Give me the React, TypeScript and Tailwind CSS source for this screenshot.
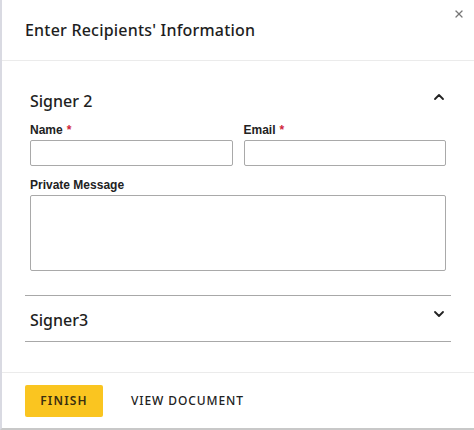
import { X, ChevronUp, ChevronDown } from "lucide-react";

const heading = { fontFamily: '"Noto Sans", "DejaVu Sans", sans-serif' };
const label = { fontFamily: '"Liberation Sans", Arial, sans-serif' };

function Field({ title, required }: { title: string; required?: boolean }) {
  return (
    <div className="flex flex-col">
      <label className="h-[16px] text-[12px] font-bold text-[#222] leading-[16px]" style={label}>
        {title}
        {required && <span className="ml-1 text-[#d0253a]">*</span>}
      </label>
      <input className="mt-[2px] h-[26px] rounded-[2px] border border-[#a9a9a9] bg-white" />
    </div>
  );
}

export default function App() {
  return (
    <div className="w-[474px] h-[430px] bg-white border-l-2 border-l-[#d9dae2] border-b-2 border-b-[#c8c8c8] flex flex-col text-[#1e1e1e]">
      <header className="relative h-[61px] flex items-center pl-[23px] border-b border-[#ebebeb]">
        <h1 className="text-[16px] font-medium tracking-[0.2px]" style={heading}>
          Enter Recipients' Information
        </h1>
        <X className="absolute right-[9px] top-[8px] w-[12px] h-[12px] text-[#777]" strokeWidth={2.5} />
      </header>

      <div className="px-[23px] flex flex-col">
        <div className="h-[61px] pt-[28px] flex items-start justify-between">
          <span className="pl-[5px] text-[16px] font-medium" style={heading}>Signer 2</span>
          <ChevronUp className="mr-[4px] mt-[0px] w-[16px] h-[16px] text-[#222]" strokeWidth={2.75} />
        </div>
        <div className="px-[5px] flex flex-col">
          <div className="grid grid-cols-2 gap-[11px]">
            <Field title="Name" required />
            <Field title="Email" required />
          </div>
          <label className="mt-[11px] h-[16px] text-[12px] font-bold text-[#222] leading-[16px]" style={label}>
            Private Message
          </label>
          <textarea className="mt-[2px] h-[76px] resize-none rounded-[2px] border border-[#a9a9a9]" />
        </div>
        <div className="mt-[24px] border-t border-[#a8a8a8] h-[46px] flex items-center justify-between">
          <span className="pl-[5px] pt-[2px] text-[16px] font-medium" style={heading}>Signer3</span>
          <ChevronDown className="mr-[4px] mb-[10px] w-[16px] h-[16px] text-[#222]" strokeWidth={2.75} />
        </div>
        <div className="border-t border-[#a8a8a8]" />
      </div>

      <div className="mt-[30px] border-t border-[#ebebeb] flex items-center pl-[23px] pt-[12px] gap-[28px]">
        <button
          className="w-[78px] h-[32px] rounded-[2px] bg-[#fac520] text-[12px] font-semibold tracking-[1.2px] text-[#3b2f10]"
          style={heading}
        >
          FINISH
        </button>
        <span className="text-[12px] font-medium tracking-[0.9px] text-[#222]" style={heading}>
          VIEW DOCUMENT
        </span>
      </div>
    </div>
  );
}
